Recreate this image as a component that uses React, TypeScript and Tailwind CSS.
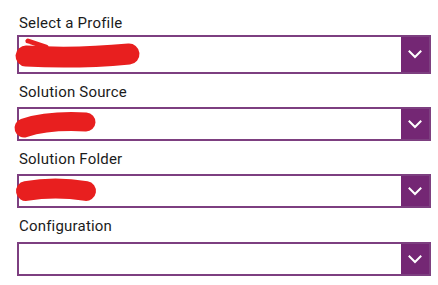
import React from "react";

const fields = [
  { label: "Select a Profile", h: "h-[39px]", mb: "mb-[2px]" },
  { label: "Solution Source", h: "h-[34px]", mb: "mb-[5px]" },
  { label: "Solution Folder", h: "h-[34px]", mb: "mb-[5px]" },
  { label: "Configuration", h: "h-[34px]", mb: "mb-[6px]" },
];

function Chevron() {
  return (
    <svg width="14" height="9" viewBox="0 0 14 9" fill="none">
      <path d="M1.5 1.5 L7 7 L12.5 1.5" stroke="white" strokeWidth="2" strokeLinecap="square" />
    </svg>
  );
}

export default function App() {
  return (
    <div
      className="relative w-[438px] h-[285px] bg-white overflow-hidden"
      style={{ fontFamily: 'Roboto, "Noto Sans", sans-serif' }}
    >
      <div className="flex flex-col gap-[8px] pt-[13px] pl-[17px] pr-[7px]">
        {fields.map((f) => (
          <div key={f.label} className="flex flex-col">
            <div className={`h-[20px] leading-[20px] text-[15px] tracking-[0.2px] text-[#1b1b1b] pl-[2px] ${f.mb}`}>{f.label}</div>
            <div className={`flex ${f.h} border-2 border-[#7d3f80] bg-white`}>
              <div className="flex-1" />
              <div className="w-[28px] bg-[#742774] flex items-center justify-center">
                <Chevron />
              </div>
            </div>
          </div>
        ))}
      </div>
      <svg className="absolute left-0 top-0 pointer-events-none" width="438" height="285" viewBox="0 0 438 285">
        <g stroke="#e81f1f" strokeLinecap="round" fill="none">
          <path d="M26 56 Q75 59 129 54" strokeWidth="21" />
          <path d="M28 41 L46 47" strokeWidth="5" />
          <path d="M24 128 Q48 120 86 122" strokeWidth="19" />
          <path d="M26 191 Q55 186 86 191" strokeWidth="20" />
        </g>
      </svg>
    </div>
  );
}
